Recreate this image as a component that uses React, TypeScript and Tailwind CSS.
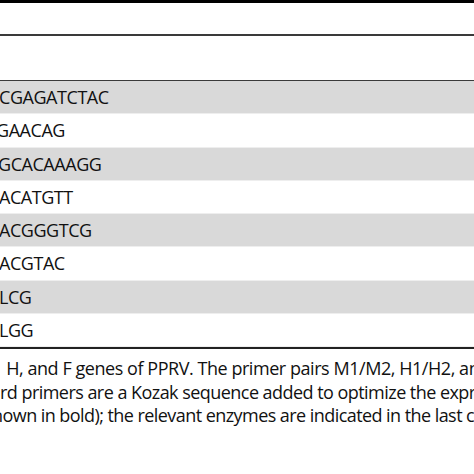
const rows = [
  { seq: "CGAGATCTAC", shift: "-ml-[1px]" },
  { seq: "GAACAG", shift: "-ml-[4px]" },
  { seq: "GCACAAAGG", shift: "-ml-[2px]" },
  { seq: "ACATGTT", shift: "-ml-[1px]" },
  { seq: "ACGGGTCG", shift: "-ml-[1px]" },
  { seq: "ACGTAC", shift: "-ml-[1px]" },
  { seq: "LCG", shift: "-ml-[1px]" },
  { seq: "LGG", shift: "-ml-[1px]" },
];

export default function App() {
  return (
    <div
      className="w-[474px] h-[474px] overflow-hidden bg-white text-[#111] text-[18px] tracking-[-0.45px]"
      style={{ fontFamily: '"Open Sans", "Noto Sans", sans-serif' }}
    >
      <div className="h-[3px] bg-black" />
      <div className="h-[31px]" />
      <div className="h-[1.5px] bg-[#3a3a3a]" />
      <div className="h-[44px]" />
      <div className="h-[1.5px] bg-[#3a3a3a]" />

      {/* table body */}
      <div className="flex flex-col">
        {rows.map((r, i) => (
          <div
            key={i}
            className={`h-[33.25px] leading-[33.25px] whitespace-nowrap overflow-hidden border-b border-[#eeeeee] ${
              i % 2 === 0 ? "bg-[#d9d9d9]" : "bg-white"
            }`}
          >
            <span className={`inline-block ${r.shift}`}>{r.seq}</span>
          </div>
        ))}
      </div>
      <div className="h-[2px] bg-[#222]" />

      {/* caption, cropped on both sides */}
      <div className="pt-[8px] leading-[23.5px] whitespace-nowrap overflow-hidden">
        <div className="ml-[2px]">&nbsp;H, and F genes of PPRV. The primer pairs M1/M2, H1/H2, and</div>
        <div className="ml-[0px] tracking-[-0.54px]">rd primers are a Kozak sequence added to optimize the expression</div>
        <div className="-ml-[8px] tracking-[-0.56px]">hown in bold); the relevant enzymes are indicated in the last column</div>
      </div>
    </div>
  );
}
